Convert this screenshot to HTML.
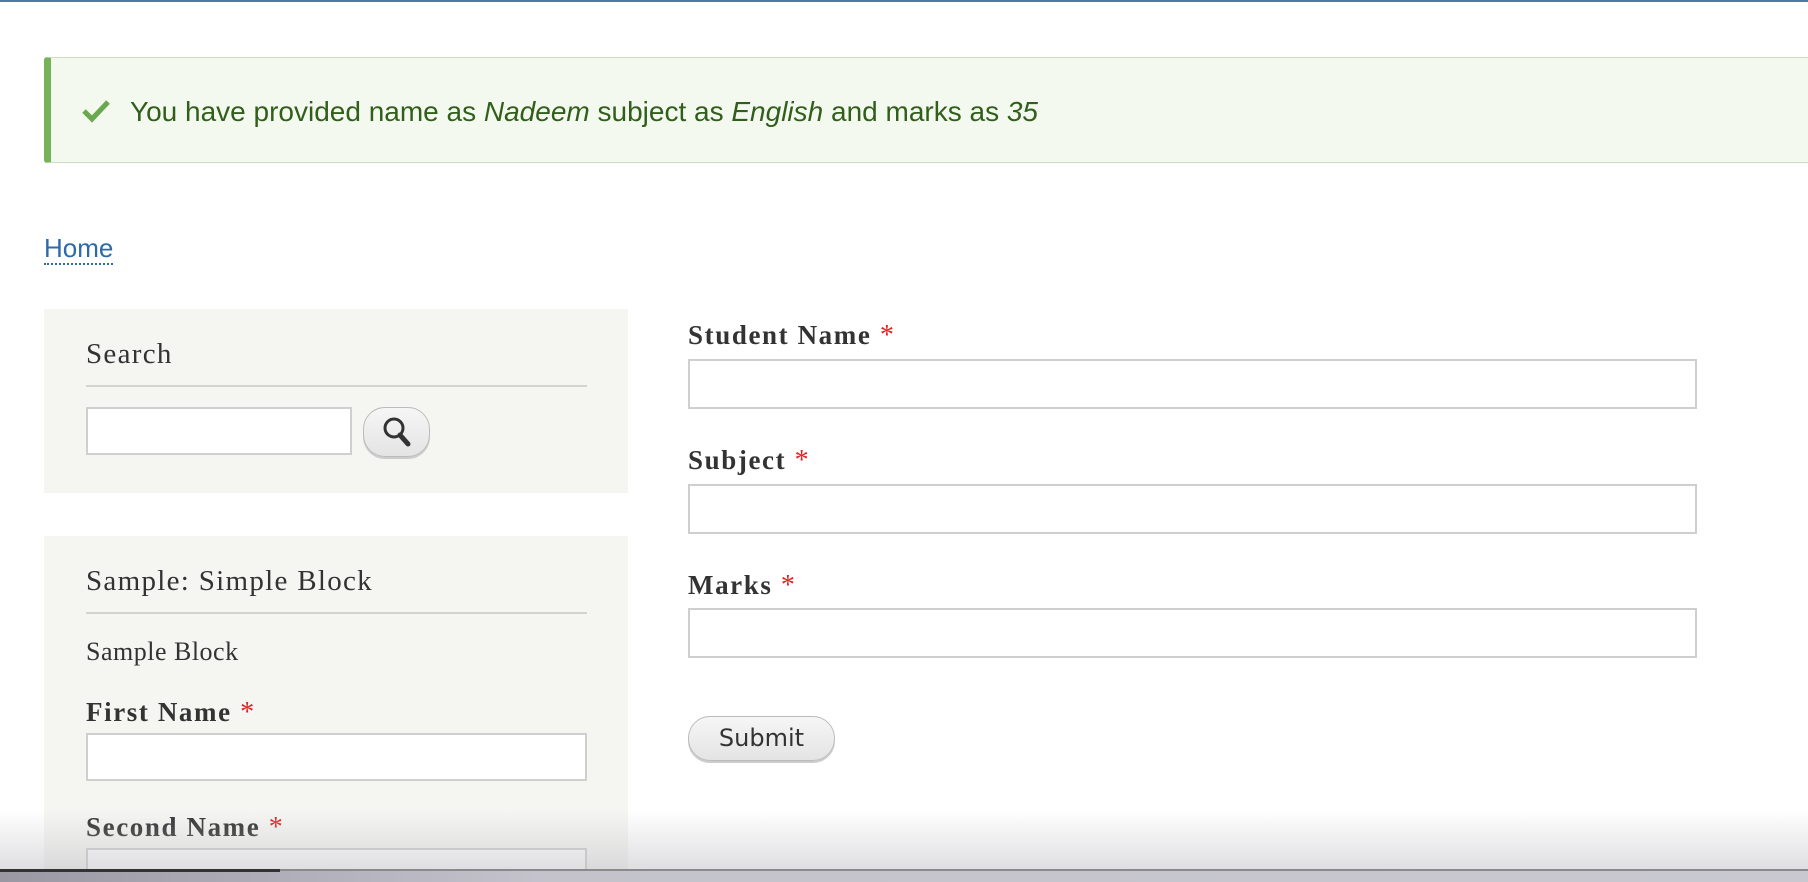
<!DOCTYPE html>
<html><head><meta charset="utf-8"><style>
body{margin:0;width:1808px;height:882px;overflow:hidden;background:#fff;position:relative;font-family:"Liberation Serif",serif;color:#333}
.a{position:absolute}
.topline{left:0;top:0;width:1808px;height:2px;background:#4a7aa5}
.msg{left:44px;top:57px;width:1800px;height:106px;background:#f3f9ee;border:1px solid #c9dfc0;border-left:7px solid #77b259;border-radius:3px;box-sizing:border-box}
.msgt{left:130px;top:96px;font:28px "Liberation Sans",sans-serif;color:#325e1c;white-space:nowrap}
.home{left:44px;top:233px;font:26px "Liberation Sans",sans-serif;color:#2c6aa8;border-bottom:2px dotted #2c6aa8;line-height:30px}
.blk{background:#f5f5f2;left:44px;width:584px}
.h2{font-size:29px;letter-spacing:1.3px;color:#333;left:86px;white-space:nowrap}
.rule{left:86px;width:501px;height:2px;background:#d3d3d0}
.inp{background:#fff;border:2px solid #cfcfcf;box-sizing:border-box}
.lbl{font-weight:bold;font-size:27px;letter-spacing:1.6px;white-space:nowrap;color:#333}
.lbl span{color:#d22;font-weight:normal;font-size:28px}
.btn{border:1px solid #bbb;border-radius:22px;background:linear-gradient(#f6f6f6,#e4e4e4);box-sizing:border-box;box-shadow:0 2px 0 #ccc}
.shade{left:0;top:810px;width:1808px;height:60px;background:linear-gradient(rgba(200,200,205,0),rgba(190,190,195,0.5))}
</style></head><body>
<div class="a topline"></div>
<div class="a msg"></div>
<svg class="a" style="left:81px;top:99px" width="30" height="24" viewBox="0 0 30 24"><path d="M3 12 L11 20 L27 3" stroke="#6aa84f" stroke-width="5" fill="none"/></svg>
<div class="a msgt">You have provided name as <i>Nadeem</i> subject as <i>English</i> and marks as <i>35</i></div>
<div class="a home">Home</div>

<div class="a blk" style="top:309px;height:184px"></div>
<div class="a h2" style="top:338px">Search</div>
<div class="a rule" style="top:385px"></div>
<div class="a inp" style="left:86px;top:407px;width:266px;height:48px"></div>
<div class="a btn" style="left:363px;top:407px;width:67px;height:50px"></div>
<svg class="a" style="left:381px;top:415px" width="32" height="34" viewBox="0 0 32 34"><circle cx="13" cy="13" r="9" stroke="#333" stroke-width="3" fill="none"/><path d="M19 20 L27 29" stroke="#333" stroke-width="5" stroke-linecap="round"/></svg>

<div class="a blk" style="top:536px;height:346px"></div>
<div class="a h2" style="top:565px">Sample: Simple Block</div>
<div class="a rule" style="top:612px"></div>
<div class="a" style="left:86px;top:637px;font-size:26px;letter-spacing:0.5px;white-space:nowrap">Sample Block</div>
<div class="a lbl" style="left:86px;top:697px">First Name <span>*</span></div>
<div class="a inp" style="left:86px;top:733px;width:501px;height:48px"></div>
<div class="a lbl" style="left:86px;top:812px">Second Name <span>*</span></div>
<div class="a inp" style="left:86px;top:848px;width:501px;height:22px;border-bottom:none"></div>

<div class="a lbl" style="left:688px;top:320px">Student Name <span>*</span></div>
<div class="a inp" style="left:688px;top:359px;width:1009px;height:50px"></div>
<div class="a lbl" style="left:688px;top:445px">Subject <span>*</span></div>
<div class="a inp" style="left:688px;top:484px;width:1009px;height:50px"></div>
<div class="a lbl" style="left:688px;top:570px">Marks <span>*</span></div>
<div class="a inp" style="left:688px;top:608px;width:1009px;height:50px"></div>
<div class="a btn" style="left:688px;top:716px;width:147px;height:45px;font:24px 'DejaVu Sans',sans-serif;color:#333;text-align:center;line-height:42px">Submit</div>

<div class="a shade"></div>
<div class="a" style="left:0;top:869px;width:1808px;height:13px;background:linear-gradient(90deg,#9a98a3,#c4c3cc 30%,#c9c8d0)"></div>
<div class="a" style="left:0;top:869px;width:1808px;height:2px;background:#8a8a8a"></div>
<div class="a" style="left:0;top:869px;width:280px;height:3px;background:#333"></div>
</body></html>
